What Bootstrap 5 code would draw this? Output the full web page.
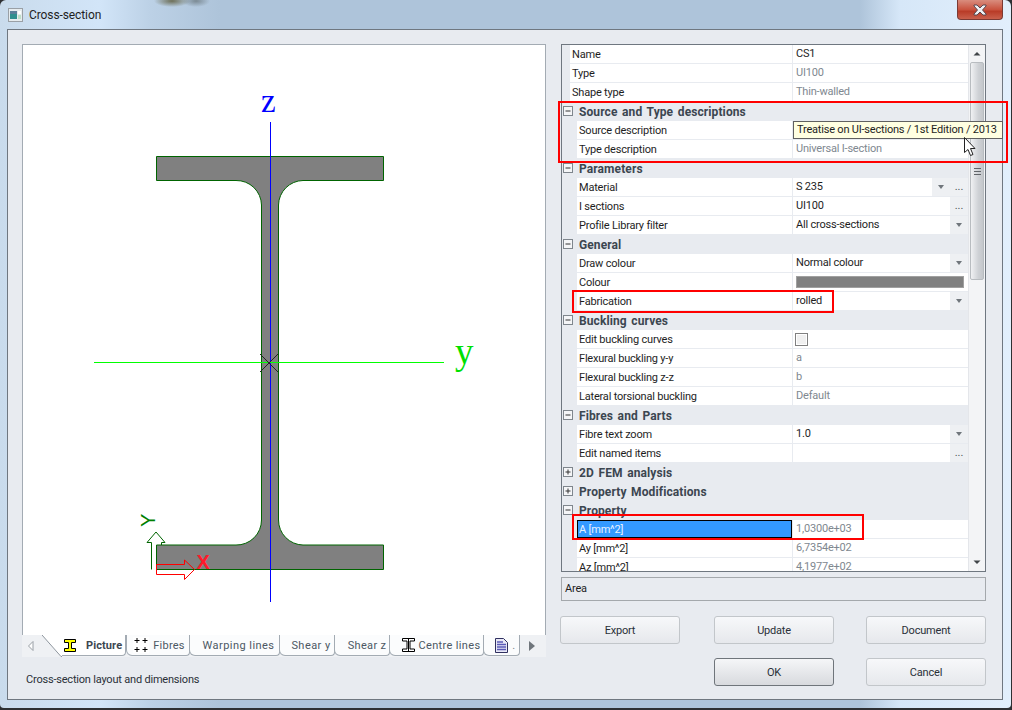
<!DOCTYPE html>
<html lang="en">
<head>
<meta charset="UTF-8">
<title>Cross-section</title>
<link href="https://cdn.jsdelivr.net/npm/bootstrap@5.3.0/dist/css/bootstrap.min.css" rel="stylesheet">
<style>
html, body { margin: 0; height: 710px; overflow: hidden; background: #2e3033; }
body, .btn { font-family: Roboto, "Noto Sans", sans-serif; font-size: 11px; letter-spacing: -.2px; color: #1e1e1e; }
.win { position: relative; width: 1011px; height: 708px; border-radius: 6px 6px 4px 4px; padding: 0 8px 8px 7px;
  background:
    radial-gradient(ellipse 18px 6px at 172px 1px, #6d6f58, transparent),
    radial-gradient(ellipse 14px 6px at 196px 1px, #7b8a94, transparent),
    linear-gradient(90deg, #c9dbec 0, #d2e5f8 100px, #bcd1e6 150px, #aec4da 220px, #aec4da 860px, #d6e7f8 900px, #e2effc 1011px); }
.titlebar { height: 29px; font-size: 12px; letter-spacing: -.1px; }
.win-icon { margin: 1px 6px 0 1px; }
.close-x { position: absolute; right: 8px; top: 0; width: 46px; height: 20px; padding: 0; border: 1px solid #7b3a34; border-top: 0;
  border-radius: 0 0 4px 4px; background: linear-gradient(#d98d7e, #c9533f 50%, #b93c28 60%, #c9604c); }
.client { height: 671px; border: 1px solid #6f7780; background: #e8ebf0; padding: 14px; gap: 15px; }
.left-col { width: 524px; }
.right-col { width: 425px; }
.draw-panel { height: 591px; background: #fff; border: 1px solid #a3abb3; border-bottom: 0; }
.draw-panel svg { display: block; }
.tabstrip { height: 22px; width: 524px; background: #eff1f4; flex-wrap: nowrap; }
.strip-arrow { width: 20px; height: 22px; }
.strip-arrow-r { width: 22px; height: 22px; }
.tabbtn { height: 21px; padding: 0 0 0 8px; gap: 4px; color: #4c5864; background: #fbfcfd; letter-spacing: .45px; font-size: 11px;
  border: 1px solid #a3abb3; border-top: 0; border-radius: 0 0 4px 6px; white-space: nowrap; }
.tabbtn span, .tab-label { padding-top: 2px; }
.tabbtn:hover { color: #4c5864; }
.tab-active { border-left: 0; border-radius: 0 0 4px 0; color: #3c4650; font-weight: 700; letter-spacing: .1px; background: #fff; width: 64px; justify-content: flex-start; padding-left: 2px; gap: 10px; }
.tab-picture-lead { display: block; }
.tab-w-fibres { width: 64px; padding-left: 2px; letter-spacing: .25px; } .tab-w-warp { width: 91px; margin-left: -1px; } .tab-w-sy { width: 56px; margin-left: -1px; }
.tab-w-sz { width: 56px; margin-left: -1px; padding-left: 10px; letter-spacing: .3px; } .tab-w-cl { width: 95px; margin-left: -1px; padding-left: 9px; letter-spacing: .35px; } .tab-w-doc { width: 37px; margin-left: -1px; }
.caption { margin: 16px 0 0 4px; line-height: 14px; color: #2a3038; }
.pgrid { height: 528px; border: 1px solid #6f7780; background: #fff; overflow: hidden; }
.pg-list { width: 406px; background: #e8ebf0; }
.pg-row { height: 19px; padding-bottom: 1px; }
.pg-name { width: 222px; margin-left: 8px; padding: 2px 0 0 2px; line-height: 16px; background: #fff; white-space: nowrap; }
.pg-sub .pg-name { width: 215px; margin-left: 15px; padding-left: 2px; }
.pg-val { width: 175px; margin-left: 1px; padding: 1px 0 0 3px; line-height: 16px; background: #fff; white-space: nowrap; }
.pg-val.d-flex { padding-top: 0; }
.pg-val .flex-grow-1 { padding-top: 1px; }
.dim { color: #808890; }
.pg-group { height: 19px; line-height: 18px; font-size: 12px; font-weight: 700; color: #3c4650; letter-spacing: .1px; word-spacing: 1.5px; }
.pg-toggle { width: 11px; height: 11px; margin: 0 5px 0 1px; flex: none; }
.pg-sel { background: #3399ff; color: #e8f2ff; outline: 1px solid #000; outline-offset: -1px; }
.pg-drop, .pg-dots { width: 18px; height: 18px; background: #eef0f3; flex: none; }
.pg-drop::after { content: ""; display: block; margin: 7px auto 0; width: 0; border: 3px solid transparent; border-top: 4px solid #70767c; border-bottom: 0; }
.pg-dots { line-height: 18px; text-align: center; color: #50565c; letter-spacing: 0; }
.pg-swatch { width: 168px; height: 12px; background: #808080; border: 1px solid #a0a0a0; }
.pg-check { width: 13px; height: 13px; margin-left: -1px; border: 1px solid #808080; background: #f0f0f0; box-shadow: inset 0 0 0 1px #fff; }
.sbar { width: 17px; background: #f3f4f6; border-left: 1px solid #e4e6ea; }
.sb-arrow { height: 17px; flex: none; }
.sb-thumb { height: 218px; margin: 0 1px 0 1px; border: 1px solid #b8bcc0; border-radius: 2px; background: linear-gradient(90deg, #f0f1f3, #cfd2d6 60%, #c4c7cb); }
.sb-grip { width: 7px; height: 7px; border-top: 1px solid #606468; border-bottom: 1px solid #606468; position: relative; }
.sb-grip::after { content: ""; position: absolute; left: 0; right: 0; top: 2px; height: 1px; background: #606468; }
.areabox { height: 24px; margin-top: 5px; border: 1px solid #a4a8ac; line-height: 21px; padding-left: 3px; }
.btn-row { margin: 15px 0 0 -1px; }
.btn-row-end { margin-top: 14px; gap: 32px; }
.winbtn { width: 120px; height: 28px; padding: 1px 0 0; line-height: 26px; border: 1px solid #c2c6ca; border-radius: 3px; color: #2a3038;
  background: linear-gradient(#f7f8fa, #e6e8ec); }
.winbtn-def { border-color: #6f757b; background: linear-gradient(#f5f6f8, #d8dade); }
.btn-after-export { margin: 0 32px 0 34px; }
.redbox { position: absolute; border: 2px solid #f00; pointer-events: none; }
.rb-desc { left: 558px; top: 101px; width: 450px; height: 62px; }
.rb-fab { left: 572px; top: 290px; width: 262px; height: 23px; }
.rb-area { left: 572px; top: 514px; width: 292px; height: 26px; }
.tip { position: absolute; left: 793px; top: 121px; width: 210px; height: 18px; background: #ffffe1; border: 1px solid #606060; line-height: 15px; padding-left: 3px; white-space: nowrap; }
.cursor { position: absolute; left: 963px; top: 136px; }
</style>
</head>
<body>
<div class="win">
  <div class="titlebar d-flex align-items-center">
    <svg class="win-icon" width="15" height="14" viewBox="0 0 15 14"><rect x=".5" y=".5" width="14" height="13" fill="#e6ecef" stroke="#9aa0a6"/><rect x="2" y="3" width="7" height="8" fill="#2f8f8f"/><rect x="2" y="3" width="7" height="3" fill="#5a7f9a"/><rect x="10" y="3" width="3" height="3" fill="#fff"/><rect x="10" y="7" width="3" height="4" fill="#bfe0c8"/></svg>
    <span>Cross-section</span>
  </div>
  <button class="close-x d-flex align-items-center justify-content-center" aria-label="Close">
    <svg width="16" height="12" viewBox="0 0 16 12"><path d="M2 1h3l3 3 3-3h3v1l-3.500 4L14 10v1h-3L8 8l-3 3H2v-1l3.500-4L2 2z" fill="#eef1f4" stroke="#4a4048" stroke-width=".9"/></svg>
  </button>

  <div class="client d-flex">
    <div class="left-col">
      <div class="draw-panel">
        <svg width="522" height="591" viewBox="23 45 522 591" shape-rendering="crispEdges">
          <path shape-rendering="auto" d="M156.500 156.500H383.500V180.500H303A25 25 0 0 0 278.500 205V520A25 25 0 0 0 303 545H383.500V569.500H156.500V545H236A25 25 0 0 0 261.500 520V205A25 25 0 0 0 236 180.500H156.500Z" fill="#808080" stroke="#006400"/>
          <line x1="270.500" y1="122" x2="270.500" y2="602" stroke="#0000ff"/>
          <line x1="94" y1="362.500" x2="444" y2="362.500" stroke="#00ff00"/>
          <path shape-rendering="auto" d="M260 354L278 372M278 354L260 372" stroke="#222" fill="none"/>
          <text x="261" y="112" font-family="Liberation Serif" font-size="33" fill="#0000ff">z</text>
          <text x="455" y="364" font-family="Liberation Serif" font-size="37" fill="#00e000">y</text>
          <path d="M151.500 569.500V542.500H147L156 532L165 542.500H161.500V545" fill="none" stroke="#006400" shape-rendering="auto"/>
          <path d="M156.500 564.500H184.500V560L194.500 569.500L184.500 579.500V574.500H156.500V564.500" fill="none" stroke="#ff0000" shape-rendering="auto"/>
          <text x="196.500" y="569" font-family="Liberation Sans" font-weight="700" font-size="20" fill="#ff1a2a">X</text>
          <text transform="translate(155 527) rotate(-90)" font-family="Liberation Sans" font-size="20" fill="#008000">Y</text>
        </svg>
      </div>
      <div class="nav tabstrip">
        <svg class="strip-arrow" viewBox="0 0 20 22"><path d="M11 6.500L6.500 11L11 15.500Z" fill="#fff" stroke="#9aa0a6"/></svg>
        <svg class="tab-picture-lead" width="20" height="22" viewBox="0 0 20 22"><path d="M0 0L18 21H20V0Z" fill="#fff"/><path d="M0 0L19 21.500H20" fill="none" stroke="#8d959d"/></svg>
        <a class="nav-link tabbtn tab-active d-flex align-items-center">
          <svg width="12" height="13" viewBox="0 0 12 13"><path d="M.5.5h11v3h-4v6h4v3H.5v-3h4v-6h-4z" fill="#ffff00" stroke="#000"/></svg>
          <span>Picture</span>
        </a>
        <a class="nav-link tabbtn tab-w-fibres d-flex align-items-center justify-content-center">
          <svg width="16" height="16" viewBox="0 0 16 16"><rect width="16" height="16" fill="#fff"/><path d="M1.500 3.500h5M4 1v5M9.500 3.500h5M12 1v5M1.500 12.500h5M4 10v5M9.500 12.500h5M12 10v5" stroke="#000" fill="none"/></svg>
          <span>Fibres</span>
        </a>
        <a class="nav-link tabbtn tab-w-warp d-flex align-items-center justify-content-center"><span>Warping lines</span></a>
        <a class="nav-link tabbtn tab-w-sy d-flex align-items-center justify-content-center"><span>Shear y</span></a>
        <a class="nav-link tabbtn tab-w-sz d-flex align-items-center justify-content-center"><span>Shear z</span></a>
        <a class="nav-link tabbtn tab-w-cl d-flex align-items-center justify-content-center">
          <svg width="13" height="14" viewBox="0 0 13 14"><path d="M.5.500h12v2.500h-4.500v8h4.500v2.500H.5V11H5V3H.5z" fill="#fff" stroke="#000"/><path d="M6.500 1v12" stroke="#000"/></svg>
          <span>Centre lines</span>
        </a>
        <a class="nav-link tabbtn tab-w-doc d-flex align-items-center justify-content-center">
          <svg width="13" height="15" viewBox="0 0 13 15"><path d="M.5.500h8l4 4v10H.5z" fill="#e8e8f6" stroke="#303060"/><path d="M2 4h6M2 6.500h9M2 9h9M2 11.500h9" stroke="#5a5ab8" stroke-width="1.300"/></svg>
          <span class="dim">.</span>
        </a>
        <svg class="strip-arrow-r ms-auto" viewBox="0 0 22 22"><path d="M5 6L11 11L5 16Z" fill="#70767c"/></svg>
      </div>
      <div class="caption">Cross-section layout and dimensions</div>
    </div>

    <div class="right-col">
      <div class="pgrid d-flex">
        <div class="pg-list">
          <div class="pg-row d-flex"><span class="pg-name">Name</span><span class="pg-val">CS1</span></div>
          <div class="pg-row d-flex"><span class="pg-name">Type</span><span class="pg-val dim">UI100</span></div>
          <div class="pg-row d-flex"><span class="pg-name">Shape type</span><span class="pg-val dim">Thin-walled</span></div>
          <div class="pg-group d-flex align-items-center"><svg class="pg-toggle" viewBox="0 0 11 11"><rect x=".5" y=".5" width="9" height="9" fill="#f4f5f7" stroke="#7f868d"/><path d="M2.500 5h5" stroke="#333"/></svg>Source and Type descriptions</div>
          <div class="pg-row pg-sub d-flex"><span class="pg-name">Source description</span><span class="pg-val dim"></span></div>
          <div class="pg-row pg-sub d-flex"><span class="pg-name">Type description</span><span class="pg-val dim">Universal I-section</span></div>
          <div class="pg-group d-flex align-items-center"><svg class="pg-toggle" viewBox="0 0 11 11"><rect x=".5" y=".5" width="9" height="9" fill="#f4f5f7" stroke="#7f868d"/><path d="M2.500 5h5" stroke="#333"/></svg>Parameters</div>
          <div class="pg-row pg-sub d-flex"><span class="pg-name">Material</span><span class="pg-val d-flex"><span class="flex-grow-1">S 235</span><span class="pg-drop"></span><span class="pg-dots">...</span></span></div>
          <div class="pg-row pg-sub d-flex"><span class="pg-name">I sections</span><span class="pg-val d-flex"><span class="flex-grow-1">UI100</span><span class="pg-dots">...</span></span></div>
          <div class="pg-row pg-sub d-flex"><span class="pg-name">Profile Library filter</span><span class="pg-val d-flex"><span class="flex-grow-1">All cross-sections</span><span class="pg-drop"></span></span></div>
          <div class="pg-group d-flex align-items-center"><svg class="pg-toggle" viewBox="0 0 11 11"><rect x=".5" y=".5" width="9" height="9" fill="#f4f5f7" stroke="#7f868d"/><path d="M2.500 5h5" stroke="#333"/></svg>General</div>
          <div class="pg-row pg-sub d-flex"><span class="pg-name">Draw colour</span><span class="pg-val d-flex"><span class="flex-grow-1">Normal colour</span><span class="pg-drop"></span></span></div>
          <div class="pg-row pg-sub d-flex"><span class="pg-name">Colour</span><span class="pg-val d-flex align-items-center"><span class="pg-swatch"></span></span></div>
          <div class="pg-row pg-sub d-flex"><span class="pg-name">Fabrication</span><span class="pg-val d-flex"><span class="flex-grow-1">rolled</span><span class="pg-drop"></span></span></div>
          <div class="pg-group d-flex align-items-center"><svg class="pg-toggle" viewBox="0 0 11 11"><rect x=".5" y=".5" width="9" height="9" fill="#f4f5f7" stroke="#7f868d"/><path d="M2.500 5h5" stroke="#333"/></svg>Buckling curves</div>
          <div class="pg-row pg-sub d-flex"><span class="pg-name">Edit buckling curves</span><span class="pg-val d-flex align-items-center"><span class="pg-check"></span></span></div>
          <div class="pg-row pg-sub d-flex"><span class="pg-name">Flexural buckling y-y</span><span class="pg-val dim">a</span></div>
          <div class="pg-row pg-sub d-flex"><span class="pg-name">Flexural buckling z-z</span><span class="pg-val dim">b</span></div>
          <div class="pg-row pg-sub d-flex"><span class="pg-name">Lateral torsional buckling</span><span class="pg-val dim">Default</span></div>
          <div class="pg-group d-flex align-items-center"><svg class="pg-toggle" viewBox="0 0 11 11"><rect x=".5" y=".5" width="9" height="9" fill="#f4f5f7" stroke="#7f868d"/><path d="M2.500 5h5" stroke="#333"/></svg>Fibres and Parts</div>
          <div class="pg-row pg-sub d-flex"><span class="pg-name">Fibre text zoom</span><span class="pg-val d-flex"><span class="flex-grow-1">1.0</span><span class="pg-drop"></span></span></div>
          <div class="pg-row pg-sub d-flex"><span class="pg-name">Edit named items</span><span class="pg-val d-flex"><span class="flex-grow-1"></span><span class="pg-dots">...</span></span></div>
          <div class="pg-group d-flex align-items-center"><svg class="pg-toggle" viewBox="0 0 11 11"><rect x=".5" y=".5" width="9" height="9" fill="#f4f5f7" stroke="#7f868d"/><path d="M2.500 5h5M5 2.500v5" stroke="#333"/></svg>2D FEM analysis</div>
          <div class="pg-group d-flex align-items-center"><svg class="pg-toggle" viewBox="0 0 11 11"><rect x=".5" y=".5" width="9" height="9" fill="#f4f5f7" stroke="#7f868d"/><path d="M2.500 5h5M5 2.500v5" stroke="#333"/></svg>Property Modifications</div>
          <div class="pg-group d-flex align-items-center"><svg class="pg-toggle" viewBox="0 0 11 11"><rect x=".5" y=".5" width="9" height="9" fill="#f4f5f7" stroke="#7f868d"/><path d="M2.500 5h5" stroke="#333"/></svg>Property</div>
          <div class="pg-row pg-sub d-flex"><span class="pg-name pg-sel">A [mm^2]</span><span class="pg-val dim">1,0300e+03</span></div>
          <div class="pg-row pg-sub d-flex"><span class="pg-name">Ay [mm^2]</span><span class="pg-val dim">6,7354e+02</span></div>
          <div class="pg-row pg-sub d-flex"><span class="pg-name">Az [mm^2]</span><span class="pg-val dim">4,1977e+02</span></div>
        </div>
        <div class="sbar d-flex flex-column">
          <svg class="sb-arrow" viewBox="0 0 16 17"><path d="M4.500 10.500L8 7l3.500 3.500z" fill="#404448"/></svg>
          <div class="sb-thumb d-flex align-items-center justify-content-center"><div class="sb-grip"></div></div>
          <svg class="sb-arrow mt-auto" viewBox="0 0 16 17"><path d="M4.500 6.500L8 10l3.500-3.500z" fill="#404448"/></svg>
        </div>
      </div>
      <div class="areabox">Area</div>
      <div class="d-flex btn-row">
        <button class="btn winbtn">Export</button>
        <button class="btn winbtn btn-after-export">Update</button>
        <button class="btn winbtn">Document</button>
      </div>
      <div class="d-flex btn-row-end justify-content-end">
        <button class="btn winbtn winbtn-def">OK</button>
        <button class="btn winbtn">Cancel</button>
      </div>
    </div>
  </div>

  <div class="redbox rb-desc"></div>
  <div class="redbox rb-fab"></div>
  <div class="redbox rb-area"></div>
  <div class="tip">Treatise on UI-sections / 1st Edition / 2013</div>
  <svg class="cursor" width="14" height="22" viewBox="0 0 14 22"><path d="M1.500 1.500V16.500L5 13.500L7.500 19.500L10 18.500L7.500 12.500H12Z" fill="#fff" stroke="#222" stroke-linejoin="round"/></svg>
</div>
</body>
</html>
